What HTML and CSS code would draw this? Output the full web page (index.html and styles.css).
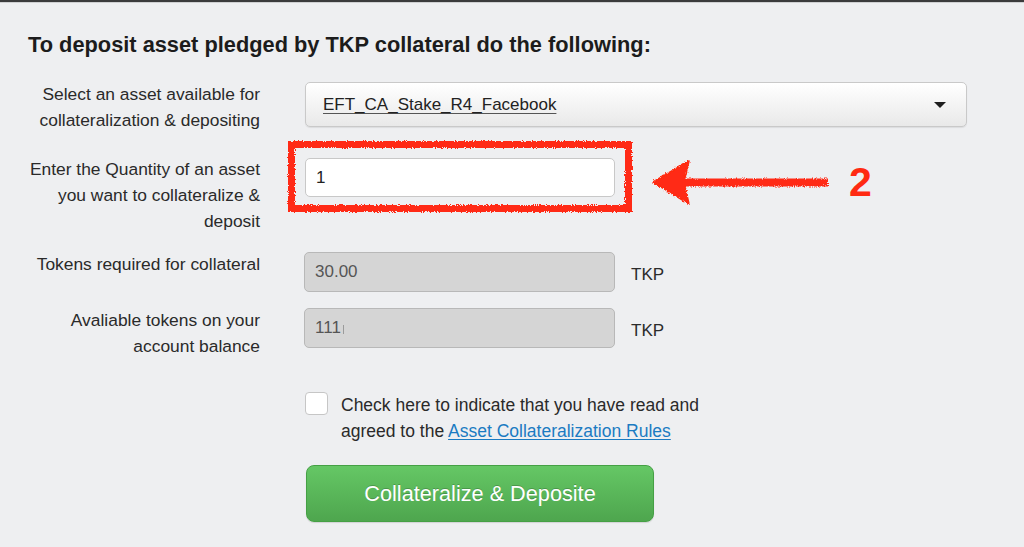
FILE: index.html
```html
<!DOCTYPE html>
<html lang="en">
<head>
<meta charset="utf-8">
<title>Deposit asset</title>
<link rel="stylesheet" href="styles.css">
</head>
<body>
<div class="topline"></div>
<main class="page">
  <h1 class="title">To deposit asset pledged by TKP collateral do the following:</h1>

  <div class="row row-asset">
    <div class="label">Select an asset available for<br>collateralization &amp; depositing</div>
    <div class="control">
      <div class="dropdown">
        <span class="dropdown-text">EFT_CA_Stake_R4_Facebook</span>
        <span class="caret"></span>
      </div>
    </div>
  </div>

  <div class="row row-qty">
    <div class="label">Enter the Quantity of an asset<br>you want to collateralize &amp;<br>deposit</div>
    <div class="control">
      <input class="field" type="text" value="1">
    </div>
  </div>

  <div class="row row-req">
    <div class="label">Tokens required for collateral</div>
    <div class="control inline">
      <div class="field readonly">30.00</div>
      <span class="unit">TKP</span>
    </div>
  </div>

  <div class="row row-avail">
    <div class="label">Avaliable tokens on your<br>account balance</div>
    <div class="control inline">
      <div class="field readonly">111<span class="cut"></span></div>
      <span class="unit">TKP</span>
    </div>
  </div>

  <div class="row row-check">
    <div class="label"></div>
    <div class="control check">
      <span class="checkbox"></span>
      <p class="check-text">Check here to indicate that you have read and<br>agreed to the <a href="#" class="link">Asset Collateralization Rules</a></p>
    </div>
  </div>

  <div class="row row-btn">
    <div class="label"></div>
    <div class="control">
      <button class="btn" type="button">Collateralize &amp; Deposite</button>
    </div>
  </div>
</main>

<svg class="annotation" width="1024" height="547" viewBox="0 0 1024 547">
  <defs>
    <filter id="rough" x="-5%" y="-20%" width="110%" height="140%">
      <feTurbulence type="fractalNoise" baseFrequency="0.9" numOctaves="2" seed="3" result="n"/>
      <feDisplacementMap in="SourceGraphic" in2="n" scale="4" xChannelSelector="R" yChannelSelector="G"/>
    </filter>
  </defs>
  <g filter="url(#rough)" fill="#ff2a12" stroke="#ff2a12">
    <rect x="291.5" y="144.5" width="337" height="64" fill="none" stroke-width="7"/>
    <path d="M653 182 L689 161 L684 182 L689 204 Z" stroke-width="1.5" stroke-linejoin="round"/>
    <rect x="683" y="178.5" width="145" height="8" stroke="none"/>
  </g>
  <text x="849" y="196" class="num">2</text>
</svg>
</body>
</html>
```

FILE: styles.css
```css
html, body {
  margin: 0;
  padding: 0;
}

body {
  background: #eeeff1;
  font-family: "Liberation Sans", Arial, Helvetica, sans-serif;
  color: #2b2b2b;
  width: 1024px;
  height: 547px;
  overflow: hidden;
  position: relative;
}

.topline {
  height: 2px;
  background: #3b3b3c;
  border-bottom: 1px solid #cfd0d2;
}

.page {
  padding: 29px 0 0 28px;
}

.title {
  margin: 0;
  font-size: 21.8px;
  line-height: 26px;
  font-weight: bold;
  color: #1c1c1c;
}

.row {
  display: grid;
  grid-template-columns: 232px 1fr;
  column-gap: 45px;
  align-items: start;
}

.label {
  text-align: right;
  font-size: 17.4px;
  line-height: 26px;
  color: #2a2a2a;
}

.row-asset { margin-top: 23px; }
.row-qty { margin-top: 23px; }
.row-req { margin-top: 17px; }
.row-avail { margin-top: 15px; }
.row-check { margin-top: 33px; }
.row-btn { margin-top: 21px; }

.dropdown {
  margin-top: 1px;
  width: 662px;
  height: 45px;
  box-sizing: border-box;
  border: 1px solid #c9c9c9;
  border-radius: 5px;
  background: linear-gradient(#ffffff, #e9e9e9);
  box-shadow: 0 1px 1px rgba(0, 0, 0, 0.08);
  display: flex;
  align-items: center;
  justify-content: space-between;
  padding: 0 20px 0 17px;
}

.dropdown-text {
  font-size: 17px;
  color: #222;
  text-decoration: underline;
  text-decoration-color: #555;
  text-underline-offset: 3px;
}

.caret {
  width: 0;
  height: 0;
  border-left: 6px solid transparent;
  border-right: 6px solid transparent;
  border-top: 6px solid #1e1e1e;
}

.field {
  display: block;
  margin: 2px 0 0 0;
  width: 310px;
  height: 39px;
  box-sizing: border-box;
  border: 1px solid #c8c8c8;
  border-radius: 5px;
  background: #fff;
  padding: 0 10px;
  font-family: "Liberation Sans", Arial, sans-serif;
  font-size: 17px;
  color: #222;
  outline: none;
}

.inline {
  display: flex;
  align-items: center;
  gap: 16px;
}

.readonly {
  margin: 1px 0 0 -1px;
  width: 311px;
  height: 40px;
  line-height: 38px;
  background: #d5d5d5;
  border-color: #b8b8b8;
  color: #555;
}

.cut {
  display: inline-block;
  width: 1px;
  height: 9px;
  margin-left: 2px;
  vertical-align: -1px;
  background: rgba(85, 85, 85, 0.45);
}

.unit {
  font-size: 17px;
  color: #2b2b2b;
  margin-top: 6px;
}

.check {
  display: flex;
  align-items: flex-start;
  gap: 13px;
}

.checkbox {
  flex: none;
  width: 23px;
  height: 23px;
  box-sizing: border-box;
  background: #fff;
  border: 1px solid #c6c6c6;
  border-radius: 4px;
}

.check-text {
  margin: 0;
  font-size: 17.5px;
  line-height: 26px;
  color: #2a2a2a;
}

.link {
  color: #1b7bc2;
  text-decoration: underline;
  text-underline-offset: 2px;
}

.btn {
  margin-left: 1px;
  width: 348px;
  height: 57px;
  border: 1px solid #45a045;
  border-radius: 8px;
  background: linear-gradient(#65c765, #4ea64e);
  box-shadow: 0 1px 1px rgba(0, 0, 0, 0.12);
  color: #fff;
  font-family: "Liberation Sans", Arial, sans-serif;
  font-size: 21.7px;
  text-shadow: 0 -1px 0 rgba(0, 0, 0, 0.2);
  padding: 0;
}

.annotation {
  position: absolute;
  left: 0;
  top: 0;
  pointer-events: none;
}

.num {
  font-family: "Liberation Sans", Arial, sans-serif;
  font-weight: bold;
  font-size: 41px;
  fill: #ff2a12;
}
```
